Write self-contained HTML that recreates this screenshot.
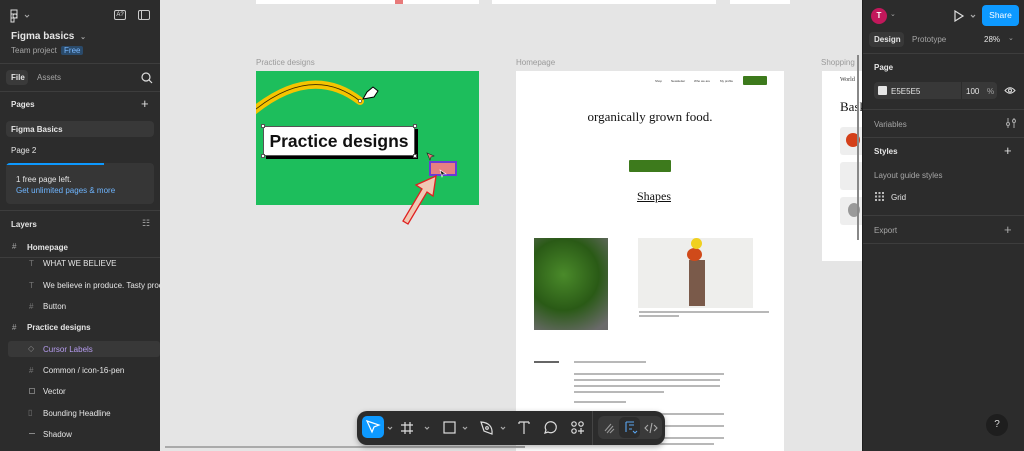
<!DOCTYPE html>
<html><head><meta charset="utf-8"><style>
*{box-sizing:border-box;margin:0;padding:0}
body{width:1024px;height:451px;overflow:hidden;background:#e5e5e5;font-family:"Liberation Sans",sans-serif;position:relative;font-size:8px}
.abs{position:absolute}
.lp{left:0;top:0;width:160px;height:451px;background:#2c2c2c;color:#e6e6e6}
.rp{left:862px;top:0;width:162px;height:451px;background:#2c2c2c;color:#e6e6e6;border-left:1px solid #1e1e1e}
.sep{position:absolute;left:0;height:1px;background:#3d3d3d;width:100%}
.t{position:absolute;white-space:nowrap}
.gray{color:#a6a6a6}
.ln{position:absolute;height:2px;background:#b8b8b8}
</style></head><body>
<!-- canvas top frames -->
<div class="abs" style="left:256px;top:0;width:223px;height:4px;background:#fff"></div>
<div class="abs" style="left:492px;top:0;width:224px;height:4px;background:#fff"></div>
<div class="abs" style="left:730px;top:0;width:60px;height:4px;background:#fff"></div>
<div class="abs" style="left:395px;top:0;width:8px;height:4px;background:#e87a7a"></div>

<!-- Practice designs -->
<div class="t" style="left:256px;top:58px;color:#9a9a9a;font-size:8px">Practice designs</div>
<div class="abs" style="left:256px;top:71px;width:223px;height:134px;background:#1dbe5c;overflow:hidden">
<svg width="223" height="134" style="position:absolute;left:0;top:0">
<path d="M-5 42 Q55 -8 104 30" fill="none" stroke="#f5c400" stroke-width="8" stroke-linecap="round"/>
<path d="M-5 42 Q55 -8 104 30" fill="none" stroke="#3a2a00" stroke-width="0.8"/>
<circle cx="104" cy="30" r="1.6" fill="#fff" stroke="#333" stroke-width=".6"/>
<path d="M107 28 L111 21 L117 16 L122 20 L118 26 Z" fill="#fff" stroke="#000" stroke-width="1"/>
<rect x="174" y="91" width="26" height="13" fill="#e77f82" stroke="#6a3bd6" stroke-width="2"/>
<path d="M171 82 l3 7 l1-3 l3-1z" fill="#e87a7a" stroke="#222" stroke-width=".6"/>
<path d="M184 99 l2 7 l1-3 l3 0z" fill="#111" stroke="#fff" stroke-width=".6"/>
</svg>
<div class="abs" style="left:10px;top:58px;width:152px;height:30px;background:#000"></div>
<div class="abs" style="left:7px;top:55px;width:152px;height:30px;background:#fff;border:1px solid #555;font-weight:bold;font-size:17.5px;color:#111;text-align:center;line-height:28px">Practice designs</div>
<div class="abs" style="left:5px;top:53px;width:4px;height:4px;background:#fff;border:1px solid #555"></div>
<div class="abs" style="left:157px;top:53px;width:4px;height:4px;background:#fff;border:1px solid #555"></div>
<div class="abs" style="left:5px;top:83px;width:4px;height:4px;background:#fff;border:1px solid #555"></div>
<div class="abs" style="left:157px;top:83px;width:4px;height:4px;background:#fff;border:1px solid #555"></div>
</div>
<svg class="abs" style="left:0;top:0" width="1024" height="451"><path d="M436 176 L416 185 L422 189 L403 221 L408 224 L427 192 L433 196 Z" fill="#f0c8b4" stroke="#e02020" stroke-width="1.3" stroke-linejoin="miter"/></svg>

<!-- Homepage -->
<div class="t" style="left:516px;top:58px;color:#9a9a9a;font-size:8px">Homepage</div>
<div class="abs" style="left:516px;top:71px;width:268px;height:380px;background:#fff">
<div class="t" style="left:139px;top:8px;font-size:3px;color:#333">Shop</div>
<div class="t" style="left:155px;top:8px;font-size:3px;color:#333">Newsletter</div>
<div class="t" style="left:178px;top:8px;font-size:3px;color:#333">Who we are</div>
<div class="t" style="left:204px;top:8px;font-size:3px;color:#333">My profile</div>
<div class="abs" style="left:227px;top:5px;width:24px;height:9px;background:#3d7a1c;border-radius:1px"></div>
<div class="t" style="left:0;width:268px;text-align:center;top:38px;font-family:'Liberation Serif',serif;font-size:13px;color:#111">organically grown food.</div>
<div class="abs" style="left:113px;top:89px;width:42px;height:12px;background:#3d7a1c;border-radius:1px"></div>
<div class="t" style="left:0;width:276px;text-align:center;top:118px;font-family:'Liberation Serif',serif;font-size:12px;color:#111;text-decoration:underline">Shapes</div>
<div class="abs" style="left:18px;top:167px;width:74px;height:92px;background:radial-gradient(circle at 40% 40%,#4a8a2a,#2a5a16 50%,#6a6a6a 90%)"></div>
<div class="abs" style="left:122px;top:167px;width:115px;height:70px;background:#eeeeec"></div>
<div class="abs" style="left:173px;top:189px;width:16px;height:46px;background:#7a5a4a"></div>
<div class="abs" style="left:171px;top:177px;width:15px;height:13px;background:#d04a1a;border-radius:50%"></div>
<div class="abs" style="left:175px;top:167px;width:11px;height:11px;background:#f0d020;border-radius:50%"></div>
<div class="ln" style="left:123px;top:240px;width:130px;height:1.5px"></div>
<div class="ln" style="left:123px;top:244px;width:40px;height:1.5px"></div>
<div class="abs" style="left:18px;top:290px;width:25px;height:2px;background:#666"></div>
<div class="ln" style="left:58px;top:290px;width:72px"></div>
<div class="ln" style="left:58px;top:302px;width:150px"></div>
<div class="ln" style="left:58px;top:308px;width:146px"></div>
<div class="ln" style="left:58px;top:314px;width:146px"></div>
<div class="ln" style="left:58px;top:320px;width:90px"></div>
<div class="ln" style="left:58px;top:330px;width:52px"></div>
<div class="ln" style="left:58px;top:342px;width:150px"></div>
<div class="ln" style="left:58px;top:354px;width:150px"></div>
<div class="ln" style="left:58px;top:366px;width:150px"></div>
<div class="ln" style="left:58px;top:372px;width:140px"></div>
</div>

<!-- Shopping frame -->
<div class="t" style="left:821px;top:58px;color:#9a9a9a;font-size:8px">Shopping</div>
<div class="abs" style="left:822px;top:71px;width:40px;height:190px;background:#fff;overflow:hidden">
<div class="t" style="left:18px;top:6px;font-family:'Liberation Serif',serif;font-size:6px;color:#333">World</div>
<div class="t" style="left:18px;top:28px;font-family:'Liberation Serif',serif;font-size:13px;color:#111">Bask</div>
<div class="abs" style="left:18px;top:56px;width:30px;height:28px;background:#eee;border-radius:3px"></div>
<div class="abs" style="left:24px;top:62px;width:14px;height:14px;background:#d4401a;border-radius:50%"></div>
<div class="abs" style="left:18px;top:91px;width:30px;height:28px;background:#eee;border-radius:3px"></div>
<div class="abs" style="left:18px;top:126px;width:30px;height:28px;background:#eee;border-radius:3px"></div>
<div class="abs" style="left:26px;top:132px;width:12px;height:14px;background:#999;border-radius:50%"></div>
</div>
<div class="abs" style="left:857px;top:55px;width:2px;height:185px;background:#888"></div>

<!-- horizontal scrollbar -->
<div class="abs" style="left:165px;top:446px;width:360px;height:2px;background:#aaa"></div>

<!-- Toolbar -->
<div class="abs" style="left:357px;top:411px;width:308px;height:34px;background:#2c2c2c;border-radius:10px;box-shadow:0 2px 6px rgba(0,0,0,.3)">
<div class="abs" style="left:5px;top:5px;width:22px;height:22px;background:#0d99ff;border-radius:5px"></div>
<svg class="abs" style="left:0;top:0" width="308" height="34" fill="none" stroke="#ddd" stroke-width="1.2">
<path d="M10 10 L22 14 L17 16 L15 21 Z" stroke="#fff"/>
<path d="M31 16 l2 2 l2-2" stroke="#aaa"/>
<path d="M48 11 v12 M53 11 v12 M44 14 h12 M44 20 h12"/>
<path d="M68 16 l2 2 l2-2" stroke="#aaa"/>
<rect x="87" y="11" width="11" height="11"/>
<path d="M106 16 l2 2 l2-2" stroke="#aaa"/>
<path d="M124 11 Q136 12 135 23 L127 20 Z"/><circle cx="130" cy="17" r="1.3"/>
<path d="M144 16 l2 2 l2-2" stroke="#aaa"/>
<path d="M162 11 h10 M167 11 v12 M162 11 v2 M172 11 v2"/>
<path d="M188 22 l1-3 a5.5 5.5 0 1 1 2 2 z"/>
<circle cx="217" cy="13" r="2.2"/><circle cx="224" cy="13" r="2.2"/><circle cx="217" cy="20" r="2.2"/><path d="M224 17 v6 M221 20 h6"/>
</svg>
<div class="abs" style="left:235px;top:0;width:1px;height:34px;background:#444"></div>
<div class="abs" style="left:241px;top:5px;width:64px;height:23px;background:#3a3a3a;border-radius:6px"></div>
<div class="abs" style="left:262px;top:6px;width:21px;height:21px;background:#2c2c2c;border-radius:5px"></div>
<svg class="abs" style="left:0;top:0" width="308" height="34" fill="none" stroke-width="1.1">
<path d="M248 20 l6-7 M250 22 l6-7 M253 22 l4-4" stroke="#999"/>
<path d="M269 11 h8 M269 11 v10 M272 14 h5 M272 18 h3 M276 20 l2 2 l2-2" stroke="#5aa6f0"/>
<path d="M291 14 l-3 3 l3 3 M297 14 l3 3 l-3 3 M295 12 l-2 10" stroke="#aaa"/>
</svg>
</div>

<!-- Left panel -->
<div class="abs lp">
<svg class="abs" style="left:10px;top:9px" width="20" height="14" fill="none" stroke="#ddd" stroke-width="1"><path d="M1 1h6v4h-6zM1 5h6v4h-6zM1 9h3v4h-3z"/><circle cx="5" cy="7" r="2"/><path d="M15 6l2 2l2-2" stroke="#aaa"/></svg>
<div class="abs" style="left:114px;top:10px;width:12px;height:10px;border:1px solid #ccc;border-radius:2px;font-size:6px;text-align:center;line-height:8px">A?</div>
<div class="abs" style="left:138px;top:10px;width:12px;height:10px;border:1px solid #ccc;border-radius:2px"><div style="width:3px;height:8px;border-right:1px solid #ccc"></div></div>
<div class="t" style="left:11px;top:31px;font-size:10px;font-weight:bold">Figma basics <span style="font-size:7px;color:#aaa;margin-left:3px">⌄</span></div>
<div class="t gray" style="left:11px;top:46px;font-size:8px">Team project <span style="background:#2a4a6a;color:#7ab8ff;padding:0 3px;border-radius:2px;margin-left:2px">Free</span></div>
<div class="sep" style="top:63px"></div>
<div class="abs" style="left:6px;top:70px;width:22px;height:15px;background:#3a3a3a;border-radius:4px"></div>
<div class="t" style="left:11px;top:73px;font-weight:bold">File</div>
<div class="t gray" style="left:37px;top:73px">Assets</div>
<svg class="abs" style="left:141px;top:72px" width="12" height="12" fill="none" stroke="#ddd" stroke-width="1.2"><circle cx="5" cy="5" r="4"/><path d="M8 8l3 3"/></svg>
<div class="sep" style="top:91px"></div>
<div class="t" style="left:11px;top:100px;font-weight:bold">Pages</div>
<div class="t" style="left:141px;top:96px;font-size:13px;color:#ddd">+</div>
<div class="abs" style="left:6px;top:121px;width:148px;height:16px;background:#383838;border-radius:4px"></div>
<div class="t" style="left:11px;top:125px;font-weight:bold">Figma Basics</div>
<div class="t" style="left:11px;top:146px">Page 2</div>
<div class="abs" style="left:6px;top:163px;width:148px;height:41px;background:#363636;border-radius:4px;overflow:hidden"><div style="width:98px;height:2px;background:#0d99ff"></div></div>
<div class="t" style="left:16px;top:175px">1 free page left.</div>
<div class="t" style="left:16px;top:186px;color:#6eb5ff">Get unlimited pages &amp; more</div>
<div class="sep" style="top:210px"></div>
<div class="t" style="left:11px;top:220px;font-weight:bold">Layers</div>
<div class="t gray" style="left:142px;top:218px;font-size:9px">☷</div>
<div class="t gray" style="left:12px;top:242px">#</div><div class="t" style="left:27px;top:243px;font-weight:bold">Homepage</div>
<div class="sep" style="top:257px"></div>
<div class="t" style="left:29px;top:259px;color:#777">T</div><div class="t" style="left:43px;top:259px">WHAT WE BELIEVE</div>
<div class="t" style="left:29px;top:281px;color:#777">T</div><div class="t" style="left:43px;top:281px">We believe in produce. Tasty proc</div>
<div class="t" style="left:29px;top:302px;color:#777">#</div><div class="t" style="left:43px;top:302px">Button</div>
<div class="t gray" style="left:12px;top:323px">#</div><div class="t" style="left:27px;top:323px;font-weight:bold">Practice designs</div>
<div class="abs" style="left:8px;top:341px;width:152px;height:16px;background:#383838;border-radius:3px"></div>
<div class="t" style="left:28px;top:344px;color:#888">◇</div><div class="t" style="left:43px;top:345px;color:#b69cf0">Cursor Labels</div>
<div class="t" style="left:29px;top:366px;color:#777">#</div><div class="t" style="left:43px;top:366px">Common / icon-16-pen</div>
<div class="abs" style="left:29px;top:388px;width:6px;height:6px;border:1px dashed #777"></div><div class="t" style="left:43px;top:387px">Vector</div>
<div class="t" style="left:28px;top:408px;color:#777">▯</div><div class="t" style="left:43px;top:409px">Bounding Headline</div>
<div class="abs" style="left:29px;top:433px;width:6px;height:1px;background:#888"></div><div class="t" style="left:43px;top:430px">Shadow</div>
</div>

<!-- Right panel -->
<div class="abs rp">
<div class="abs" style="left:8px;top:8px;width:16px;height:16px;border-radius:50%;background:#c2185b;color:#fff;font-weight:bold;text-align:center;line-height:16px;font-size:8px">T</div>
<div class="t gray" style="left:27px;top:10px;font-size:7px">⌄</div>
<svg class="abs" style="left:90px;top:10px" width="24" height="12" fill="none" stroke="#ddd" stroke-width="1.2"><path d="M2 1 L10 6 L2 11 Z"/><path d="M18 5l2 2l2-2" stroke="#aaa"/></svg>
<div class="abs" style="left:119px;top:5px;width:37px;height:21px;background:#0d99ff;border-radius:4px;color:#fff;text-align:center;line-height:21px;font-size:8.5px">Share</div>
<div class="abs" style="left:6px;top:32px;width:35px;height:15px;background:#383838;border-radius:4px"></div>
<div class="t" style="left:11px;top:35px;font-weight:bold">Design</div>
<div class="t gray" style="left:49px;top:35px">Prototype</div>
<div class="t" style="left:121px;top:35px">28%</div>
<div class="t gray" style="left:145px;top:34px;font-size:7px">⌄</div>
<div class="sep" style="top:53px"></div>
<div class="t" style="left:11px;top:63px;font-weight:bold">Page</div>
<div class="abs" style="left:11px;top:82px;width:123px;height:17px;background:#383838;border-radius:4px"></div>
<div class="abs" style="left:98px;top:82px;width:1px;height:17px;background:#2c2c2c"></div>
<div class="abs" style="left:15px;top:86px;width:9px;height:9px;background:#e5e5e5;border-radius:1px"></div>
<div class="t" style="left:28px;top:87px">E5E5E5</div>
<div class="t" style="left:103px;top:87px">100</div>
<div class="t gray" style="left:124px;top:87px">%</div>
<svg class="abs" style="left:141px;top:86px" width="12" height="9" fill="none" stroke="#ddd" stroke-width="1"><path d="M1 4.5 Q6 -1 11 4.5 Q6 10 1 4.5Z"/><circle cx="6" cy="4.5" r="1.5"/></svg>
<div class="sep" style="top:109px"></div>
<div class="t gray" style="left:11px;top:120px">Variables</div>
<svg class="abs" style="left:142px;top:117px" width="12" height="12" fill="none" stroke="#aaa" stroke-width="1"><path d="M3 1v10M9 1v10"/><circle cx="3" cy="7" r="1.5" fill="#2c2c2c"/><circle cx="9" cy="4" r="1.5" fill="#2c2c2c"/></svg>
<div class="sep" style="top:137px"></div>
<div class="t" style="left:11px;top:147px;font-weight:bold">Styles</div>
<div class="t" style="left:141px;top:143px;font-size:13px;color:#ddd">+</div>
<div class="t gray" style="left:11px;top:171px">Layout guide styles</div>
<svg class="abs" style="left:12px;top:192px" width="9" height="9" fill="#bbb"><rect x="0" y="0" width="2" height="2"/><rect x="3.5" y="0" width="2" height="2"/><rect x="7" y="0" width="2" height="2"/><rect x="0" y="3.5" width="2" height="2"/><rect x="3.5" y="3.5" width="2" height="2"/><rect x="7" y="3.5" width="2" height="2"/><rect x="0" y="7" width="2" height="2"/><rect x="3.5" y="7" width="2" height="2"/><rect x="7" y="7" width="2" height="2"/></svg>
<div class="t" style="left:28px;top:193px">Grid</div>
<div class="sep" style="top:215px"></div>
<div class="t gray" style="left:11px;top:226px">Export</div>
<div class="t" style="left:141px;top:222px;font-size:13px;color:#aaa">+</div>
<div class="sep" style="top:243px"></div>
<div class="abs" style="left:123px;top:414px;width:22px;height:22px;border-radius:50%;background:#1e1e1e;color:#ddd;text-align:center;line-height:22px;font-size:10px">?</div>
</div>
</body></html>
